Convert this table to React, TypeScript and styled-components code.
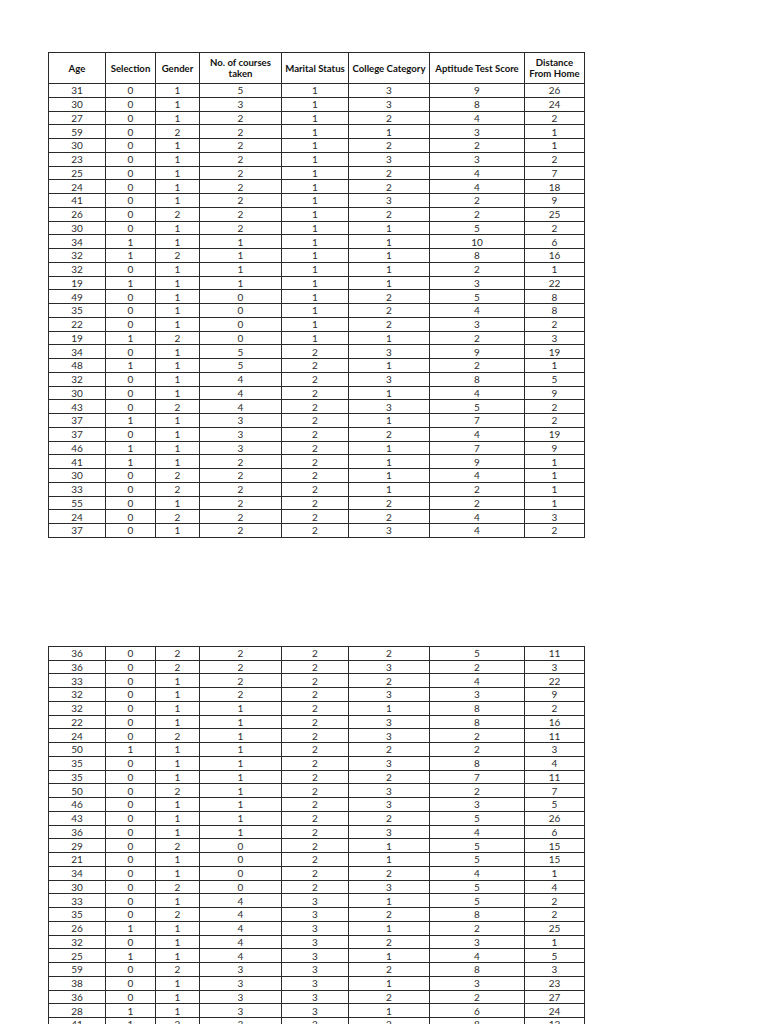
import React from "react";
import styled, { createGlobalStyle } from "styled-components";

const GlobalStyle = createGlobalStyle`
  html, body { margin: 0; padding: 0; background: #ffffff; }
  body { font-family: Lato, "Open Sans", "Liberation Sans", sans-serif; }
`;

const Page = styled.div`
  padding: 52px 0 0 48px;
  display: flex;
  flex-direction: column;
  gap: 108px;
`;

const Table = styled.table`
  border-collapse: collapse;
  table-layout: fixed;
  width: 536px;
  border: 1.5px solid #3a3a3a;
`;

const HeadCell = styled.th`
  border: 1px solid #2a2a2a;
  height: 30px;
  padding: 0 1px;
  font-size: 9.6px;
  font-weight: 700;
  line-height: 11px;
  color: #111;
  text-align: center;
  vertical-align: middle;
`;

const Row = styled.tr`
  height: 13.76px;
`;

const Cell = styled.td`
  border: 1px solid #2a2a2a;
  padding: 0;
  height: 12.76px;
  font-size: 10px;
  line-height: 12px;
  color: #2c2c2c;
  text-align: center;
  vertical-align: middle;
  white-space: nowrap;
`;

const widths = [57, 50, 44, 82, 67, 81, 95, 60];
const headers: React.ReactNode[] = [
  "Age",
  "Selection",
  "Gender",
  <>No. of courses<br />taken</>,
  "Marital Status",
  "College Category",
  "Aptitude Test Score",
  <>Distance<br />From Home</>,
];

const table1: number[][] = [
  [31, 0, 1, 5, 1, 3, 9, 26],
  [30, 0, 1, 3, 1, 3, 8, 24],
  [27, 0, 1, 2, 1, 2, 4, 2],
  [59, 0, 2, 2, 1, 1, 3, 1],
  [30, 0, 1, 2, 1, 2, 2, 1],
  [23, 0, 1, 2, 1, 3, 3, 2],
  [25, 0, 1, 2, 1, 2, 4, 7],
  [24, 0, 1, 2, 1, 2, 4, 18],
  [41, 0, 1, 2, 1, 3, 2, 9],
  [26, 0, 2, 2, 1, 2, 2, 25],
  [30, 0, 1, 2, 1, 1, 5, 2],
  [34, 1, 1, 1, 1, 1, 10, 6],
  [32, 1, 2, 1, 1, 1, 8, 16],
  [32, 0, 1, 1, 1, 1, 2, 1],
  [19, 1, 1, 1, 1, 1, 3, 22],
  [49, 0, 1, 0, 1, 2, 5, 8],
  [35, 0, 1, 0, 1, 2, 4, 8],
  [22, 0, 1, 0, 1, 2, 3, 2],
  [19, 1, 2, 0, 1, 1, 2, 3],
  [34, 0, 1, 5, 2, 3, 9, 19],
  [48, 1, 1, 5, 2, 1, 2, 1],
  [32, 0, 1, 4, 2, 3, 8, 5],
  [30, 0, 1, 4, 2, 1, 4, 9],
  [43, 0, 2, 4, 2, 3, 5, 2],
  [37, 1, 1, 3, 2, 1, 7, 2],
  [37, 0, 1, 3, 2, 2, 4, 19],
  [46, 1, 1, 3, 2, 1, 7, 9],
  [41, 1, 1, 2, 2, 1, 9, 1],
  [30, 0, 2, 2, 2, 1, 4, 1],
  [33, 0, 2, 2, 2, 1, 2, 1],
  [55, 0, 1, 2, 2, 2, 2, 1],
  [24, 0, 2, 2, 2, 2, 4, 3],
  [37, 0, 1, 2, 2, 3, 4, 2],
];

const table2: number[][] = [
  [36, 0, 2, 2, 2, 2, 5, 11],
  [36, 0, 2, 2, 2, 3, 2, 3],
  [33, 0, 1, 2, 2, 2, 4, 22],
  [32, 0, 1, 2, 2, 3, 3, 9],
  [32, 0, 1, 1, 2, 1, 8, 2],
  [22, 0, 1, 1, 2, 3, 8, 16],
  [24, 0, 2, 1, 2, 3, 2, 11],
  [50, 1, 1, 1, 2, 2, 2, 3],
  [35, 0, 1, 1, 2, 3, 8, 4],
  [35, 0, 1, 1, 2, 2, 7, 11],
  [50, 0, 2, 1, 2, 3, 2, 7],
  [46, 0, 1, 1, 2, 3, 3, 5],
  [43, 0, 1, 1, 2, 2, 5, 26],
  [36, 0, 1, 1, 2, 3, 4, 6],
  [29, 0, 2, 0, 2, 1, 5, 15],
  [21, 0, 1, 0, 2, 1, 5, 15],
  [34, 0, 1, 0, 2, 2, 4, 1],
  [30, 0, 2, 0, 2, 3, 5, 4],
  [33, 0, 1, 4, 3, 1, 5, 2],
  [35, 0, 2, 4, 3, 2, 8, 2],
  [26, 1, 1, 4, 3, 1, 2, 25],
  [32, 0, 1, 4, 3, 2, 3, 1],
  [25, 1, 1, 4, 3, 1, 4, 5],
  [59, 0, 2, 3, 3, 2, 8, 3],
  [38, 0, 1, 3, 3, 1, 3, 23],
  [36, 0, 1, 3, 3, 2, 2, 27],
  [28, 1, 1, 3, 3, 1, 6, 24],
  [41, 1, 2, 3, 3, 2, 8, 12],
  [30, 0, 1, 2, 3, 2, 4, 3],
];

const Cols = () => (
  <colgroup>
    {widths.map((w, i) => (
      <col key={i} style={{ width: w }} />
    ))}
  </colgroup>
);

const Body = ({ rows }: { rows: number[][] }) => (
  <tbody>
    {rows.map((r, i) => (
      <Row key={i}>
        {r.map((v, j) => (
          <Cell key={j}>{v}</Cell>
        ))}
      </Row>
    ))}
  </tbody>
);

export default function App() {
  return (
    <>
      <GlobalStyle />
      <Page>
        <Table>
          <Cols />
          <thead>
            <tr>
              {headers.map((h, i) => (
                <HeadCell key={i}>{h}</HeadCell>
              ))}
            </tr>
          </thead>
          <Body rows={table1} />
        </Table>
        <Table>
          <Cols />
          <Body rows={table2} />
        </Table>
      </Page>
    </>
  );
}
